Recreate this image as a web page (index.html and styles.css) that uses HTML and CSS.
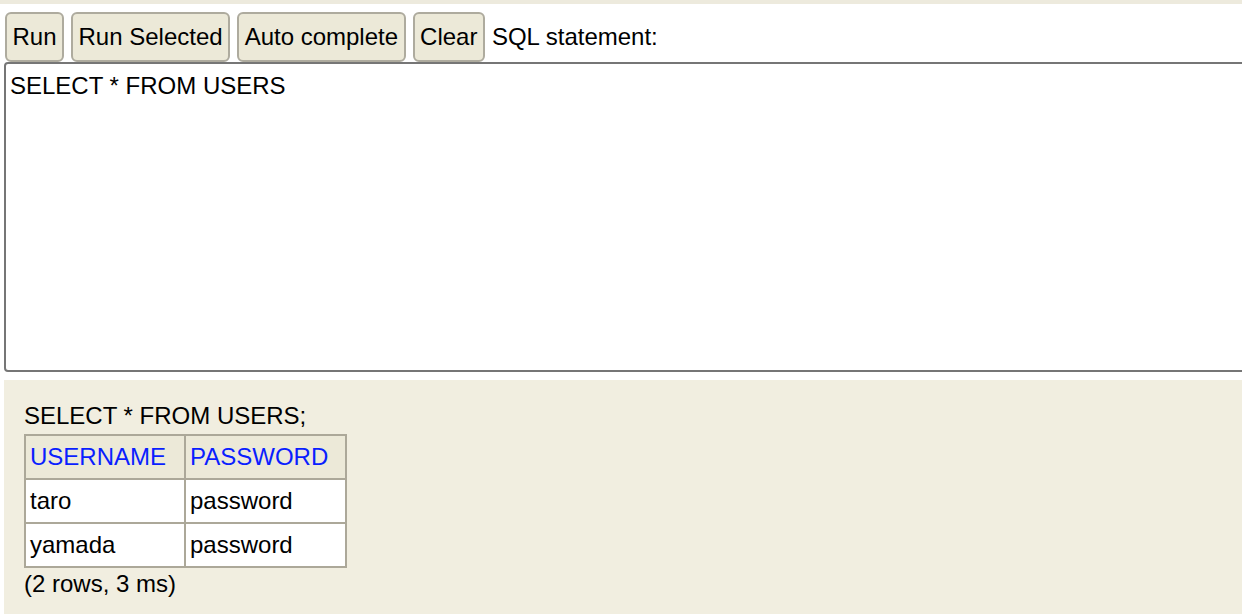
FILE: index.html
```html
<!DOCTYPE html>
<html>
<head>
<meta charset="utf-8">
<title>H2 Console</title>
<link rel="stylesheet" href="styles.css">
</head>
<body>
<div class="topbar"></div>
<form class="query">
  <div class="toolbar">
    <button type="button" class="btn">Run</button>
    <button type="button" class="btn">Run Selected</button>
    <button type="button" class="btn">Auto complete</button>
    <button type="button" class="btn">Clear</button>
    <span class="label">SQL statement:</span>
  </div>
  <textarea class="sql">SELECT * FROM USERS</textarea>
</form>
<div class="result">
  <div class="stmt">SELECT * FROM USERS;</div>
  <table class="grid">
    <thead>
      <tr><th class="c1">USERNAME</th><th class="c2">PASSWORD</th></tr>
    </thead>
    <tbody>
      <tr><td>taro</td><td>password</td></tr>
      <tr><td>yamada</td><td>password</td></tr>
    </tbody>
  </table>
  <div class="stats">(2 rows, 3 ms)</div>
</div>
</body>
</html>
```
FILE: styles.css
```css
html, body {
  margin: 0;
  padding: 0;
  background: #ffffff;
  overflow: hidden;
  font-family: "Liberation Sans", Arial, sans-serif;
  font-size: 24px;
  color: #000000;
}

.topbar {
  height: 4px;
  background: #edeadd;
}

.query {
  margin: 0;
  padding: 8px 0 0 4px;
}

.toolbar {
  display: flex;
  align-items: center;
  gap: 7px;
  padding-left: 1px;
}

.btn {
  box-sizing: border-box;
  height: 50px;
  padding: 0 5.5px;
  margin: 0;
  font-family: "Liberation Sans", Arial, sans-serif;
  font-size: 24px;
  color: #000000;
  background: #ece9d8;
  border: 2px solid #aeab9e;
  border-radius: 6px;
}

.label {
  white-space: nowrap;
}

.sql {
  display: block;
  box-sizing: border-box;
  width: 1300px;
  height: 310px;
  margin: 0;
  padding: 8px 4px;
  font-family: "Liberation Sans", Arial, sans-serif;
  font-size: 24px;
  line-height: 28px;
  color: #000000;
  background: #ffffff;
  border: 2px solid #767676;
  border-radius: 4px;
  resize: none;
}

.result {
  margin: 8px 0 0 4px;
  padding: 22px 20px 20px 20px;
  height: 234px;
  box-sizing: border-box;
  background: #f1eee0;
}

.stmt {
  line-height: 28px;
  margin-bottom: 4px;
}

.grid {
  border-collapse: collapse;
  table-layout: fixed;
  border: 2px solid #aca899;
}

.grid th,
.grid td {
  box-sizing: border-box;
  border: 2px solid #aca899;
  padding: 7px 6px 7px 4px;
  height: 43px;
  text-align: left;
  font-weight: normal;
  line-height: 28px;
  white-space: nowrap;
  background: #ffffff;
}

.grid th {
  background: #ece9d8;
  color: #0a1eff;
}

.grid .c1 {
  width: 160px;
}

.grid .c2 {
  width: 161px;
}

.stats {
  margin-top: 2px;
  line-height: 28px;
}
```
